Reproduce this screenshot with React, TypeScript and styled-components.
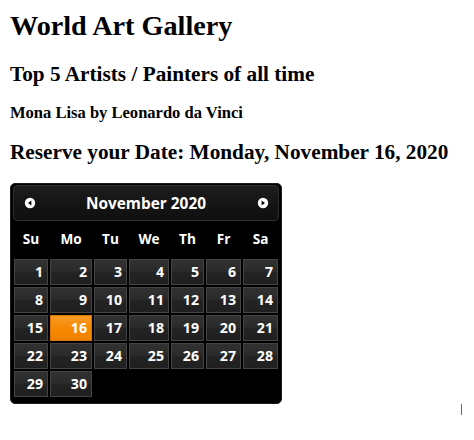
import React from 'react';
import styled, { createGlobalStyle } from 'styled-components';

const GlobalStyle = createGlobalStyle`
  html, body {
    margin: 0;
    padding: 0;
    background: #ffffff;
  }
  body {
    font-family: 'Liberation Serif', 'Times New Roman', serif;
    color: #000000;
  }
`;

const WEEKDAYS = ['Su', 'Mo', 'Tu', 'We', 'Th', 'Fr', 'Sa'];
const FIRST_WEEKDAY = 0; // November 1, 2020 is a Sunday
const DAYS_IN_MONTH = 30;
const SELECTED_DAY = 16;

function Arrow({ dir }: { dir: 'prev' | 'next' }) {
  const points = dir === 'prev' ? '7.4,3.6 4,6 7.4,8.4' : '4.6,3.6 8,6 4.6,8.4';
  return (
    <svg width="12" height="12" viewBox="0 0 12 12">
      <circle cx="6" cy="6" r="5.2" fill="#ffffff" />
      <polygon points={points} fill="#000000" />
    </svg>
  );
}

function App() {
  const blanks = Array.from({ length: FIRST_WEEKDAY });
  const days = Array.from({ length: DAYS_IN_MONTH }, (_, i) => i + 1);

  return (
    <Page>
      <GlobalStyle />
      <Title>World Art Gallery</Title>
      <SubTitle $gap={20}>Top 5 Artists / Painters of all time</SubTitle>
      <Painting>Mona Lisa by Leonardo da Vinci</Painting>
      <SubTitle $gap={18}>Reserve your Date: Monday, November 16, 2020</SubTitle>

      <Calendar>
        <CalendarHeader>
          <NavButton $side="prev" aria-label="Prev">
            <Arrow dir="prev" />
          </NavButton>
          <MonthTitle>November 2020</MonthTitle>
          <NavButton $side="next" aria-label="Next">
            <Arrow dir="next" />
          </NavButton>
        </CalendarHeader>

        <WeekdayRow>
          {WEEKDAYS.map((d) => (
            <Weekday key={d}>{d}</Weekday>
          ))}
        </WeekdayRow>

        <DayGrid>
          {blanks.map((_, i) => (
            <span key={'b' + i} />
          ))}
          {days.map((d) => (
            <DayCell key={d} $active={d === SELECTED_DAY}>
              {d}
            </DayCell>
          ))}
        </DayGrid>
      </Calendar>

      <CaretRow>
        <Caret />
      </CaretRow>
    </Page>
  );
}

const COLUMNS = '34px 42px 33px 40px 33px 35px 35px';

const Page = styled.div`
  padding: 10px 0 0 10px;
  display: flex;
  flex-direction: column;
  align-items: flex-start;
`;

const Title = styled.h1`
  margin: 0;
  font-size: 28.2px;
  line-height: 1.13;
  font-weight: bold;
`;

const SubTitle = styled.h2<{ $gap: number }>`
  margin: ${({ $gap }) => $gap}px 0 0 0;
  font-size: 21.25px;
  line-height: 1.15;
  font-weight: bold;
`;

const Painting = styled.h3`
  margin: 17px 0 0 0;
  font-size: 16.55px;
  line-height: 1.15;
  font-weight: bold;
`;

const Calendar = styled.div`
  margin-top: 18px;
  width: 266px;
  padding: 1px 2px 2px 2px;
  background: #000000;
  border: 1px solid #1c1c1c;
  border-radius: 5px;
  font-family: 'Open Sans', 'Noto Sans', 'Liberation Sans', sans-serif;
  color: #ffffff;
`;

const CalendarHeader = styled.div`
  height: 34px;
  display: grid;
  grid-template-columns: 1fr auto 1fr;
  align-items: center;
  border: 1px solid #2e2e2e;
  border-radius: 4px;
  background: linear-gradient(#1d1d1d, #141414 55%, #101010);
`;

const NavButton = styled.span<{ $side: 'prev' | 'next' }>`
  display: flex;
  justify-content: ${({ $side }) => ($side === 'prev' ? 'flex-start' : 'flex-end')};
  padding: ${({ $side }) => ($side === 'prev' ? '0 0 0 10px' : '0 9px 0 0')};
  line-height: 0;
`;

const MonthTitle = styled.span`
  font-size: 15.4px;
  font-weight: 700;
  line-height: 1;
  padding-top: 1px;
`;

const WeekdayRow = styled.div`
  display: grid;
  grid-template-columns: ${COLUMNS};
  column-gap: 2px;
  height: 36px;
  align-items: center;
  padding: 0 1px;
`;

const Weekday = styled.span`
  text-align: center;
  font-size: 13.6px;
  font-weight: 700;
  line-height: 1;
`;

const DayGrid = styled.div`
  display: grid;
  grid-template-columns: ${COLUMNS};
  grid-auto-rows: 26px;
  gap: 2px;
  padding: 2px 1px 4px 1px;
`;

const DayCell = styled.span<{ $active?: boolean }>`
  display: flex;
  align-items: center;
  justify-content: flex-end;
  padding-right: 4px;
  font-size: 14.2px;
  font-weight: 700;
  color: #ffffff;
  border: 1px solid ${({ $active }) => ($active ? '#d87400' : '#444444')};
  background: ${({ $active }) =>
    $active
      ? 'linear-gradient(#f89a26, #f58800 55%, #f08000)'
      : 'linear-gradient(#313131, #2a2a2a 50%, #232323 52%, #202020)'};
`;

const CaretRow = styled.div`
  align-self: stretch;
  display: flex;
  justify-content: flex-end;
  padding-right: 12px;
`;

const Caret = styled.span`
  width: 1px;
  height: 11px;
  background: #6e6e6e;
`;

export default App;
